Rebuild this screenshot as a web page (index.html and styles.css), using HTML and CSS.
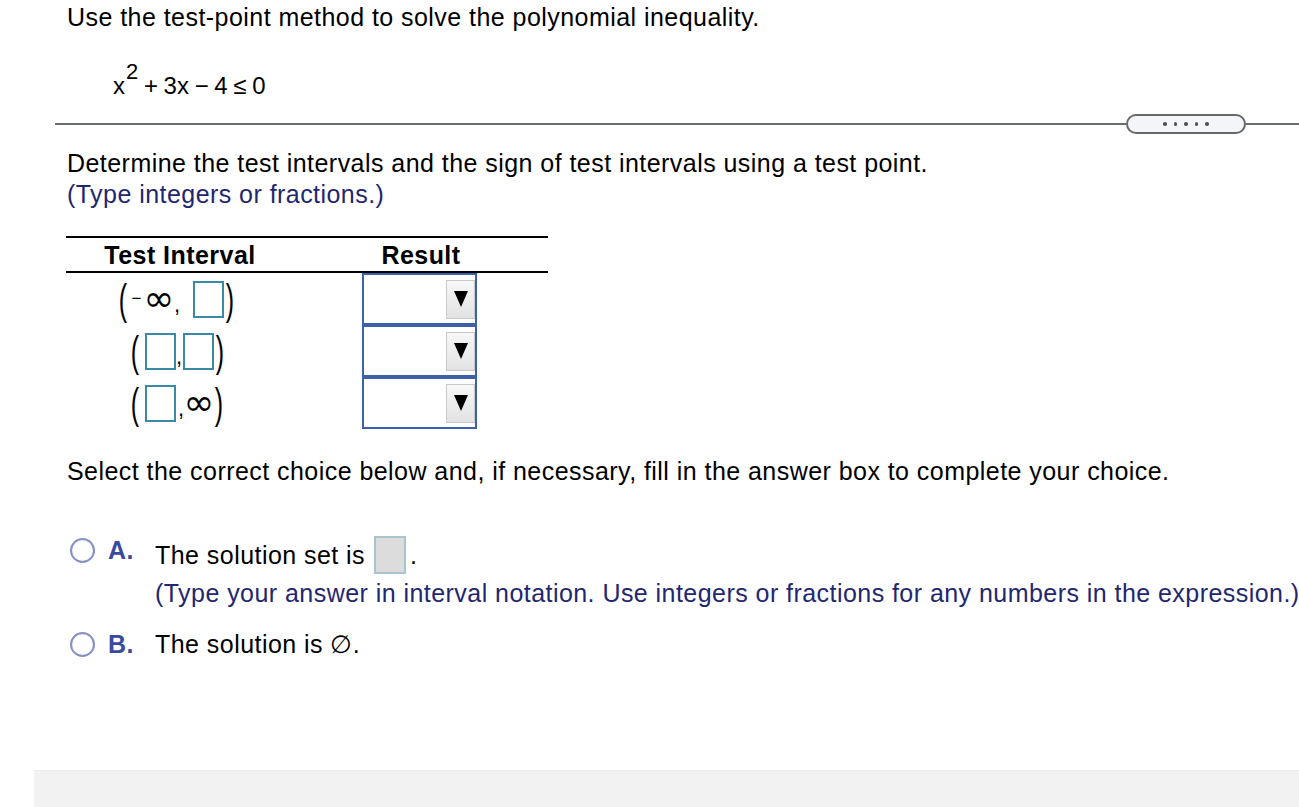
FILE: index.html
```html
<!DOCTYPE html>
<html lang="en">
<head>
<meta charset="utf-8">
<title>Test-point method</title>
<link rel="stylesheet" href="styles.css">
</head>
<body>
<div class="page">
  <section class="question">
    <p class="prompt">Use the test-point method to solve the polynomial inequality.</p>
    <p class="equation">x<sup class="exp">2</sup> + 3x <span class="op">−</span> 4 <span class="op">≤</span> 0</p>
  </section>

  <div class="divider">
    <span class="rule"></span>
    <span class="pill"><i></i><i></i><i></i><i></i><i></i></span>
    <span class="rule tail"></span>
  </div>

  <section class="answer">
    <p class="text">Determine the test intervals and the sign of test intervals using a test point.</p>
    <p class="text note">(Type integers or fractions.)</p>

    <div class="grid">
      <div class="head">Test Interval</div>
      <div class="head">Result</div>

      <div class="interval row1">
        <span class="paren">(</span><span class="minus">−</span><span class="inf">∞</span><span class="comma">,</span><span class="box"></span><span class="paren close">)</span>
      </div>
      <div class="result"><div class="select"><span class="btn"><span class="tri"></span></span></div></div>

      <div class="interval row2">
        <span class="paren">(</span><span class="box"></span><span class="comma">,</span><span class="box b2"></span><span class="paren close">)</span>
      </div>
      <div class="result"><div class="select"><span class="btn"><span class="tri"></span></span></div></div>

      <div class="interval row3">
        <span class="paren">(</span><span class="box"></span><span class="comma">,</span><span class="inf">∞</span><span class="paren close">)</span>
      </div>
      <div class="result"><div class="select"><span class="btn"><span class="tri"></span></span></div></div>
    </div>

    <p class="text select-line">Select the correct choice below and, if necessary, fill in the answer box to complete your choice.</p>

    <div class="choice choice-a">
      <div class="mark"><span class="radio"></span><span class="letter">A.</span></div>
      <div class="body">
        <div class="line"><span>The solution set is</span><span class="answer-box"></span><span>.</span></div>
        <p class="text note hint">(Type your answer in interval notation. Use integers or fractions for any numbers in the expression.)</p>
      </div>
    </div>

    <div class="choice choice-b">
      <div class="mark"><span class="radio"></span><span class="letter">B.</span></div>
      <div class="body">
        <div class="line plain"><span>The solution is ∅.</span></div>
      </div>
    </div>
  </section>

  <div class="footer"></div>
</div>
</body>
</html>
```

FILE: styles.css
```css
* { box-sizing: border-box; }

html, body {
  margin: 0;
  padding: 0;
  background: #ffffff;
}

body {
  font-family: "Liberation Sans", Arial, sans-serif;
  font-size: 25px;
  letter-spacing: 0.45px;
  line-height: 32px;
  color: #000;
  width: 1299px;
  height: 807px;
  overflow: hidden;
}

p { margin: 0; }

.question {
  padding: 1px 0 0 67px;
}

.equation {
  margin-top: 37px;
  padding-left: 46px;
  white-space: pre;
  font-size: 24px;
  letter-spacing: 0;
  word-spacing: -1px;
}

.exp {
  font-size: 22px;
  line-height: 0;
  vertical-align: 15px;
  margin-left: 1px;
}

.divider {
  display: flex;
  align-items: center;
  margin: 12px 0 0 55px;
  height: 20px;
}

.rule {
  flex: 1;
  height: 2px;
  background: #676c6c;
}

.rule.tail {
  flex: 0 0 53px;
}

.pill {
  width: 120px;
  height: 20px;
  border: 2px solid #676868;
  border-radius: 10px;
  background: #f3f5f9;
  display: flex;
  justify-content: center;
  align-items: center;
  gap: 7px;
}

.pill i {
  width: 3.5px;
  height: 3.5px;
  border-radius: 50%;
  background: #505458;
}

.answer {
  padding-left: 67px;
}

.answer > .text:first-child {
  margin-top: 13px;
}

.note {
  color: #1f2770;
  margin-top: -1px;
}

.grid {
  display: grid;
  grid-template-columns: 228px 254px;
  margin-top: 26px;
  width: 482px;
  margin-left: -1px;
}

.head {
  font-weight: bold;
  text-align: center;
  border-top: 2px solid #000;
  border-bottom: 2px solid #000;
  height: 37px;
  line-height: 32px;
  padding-top: 1px;
}

.interval {
  display: flex;
  align-items: center;
  height: 52px;
  letter-spacing: 0;
}

.interval > span {
  display: inline-flex;
  justify-content: center;
  align-items: center;
  flex: none;
}

.row1 { padding-left: 53px; }
.row2, .row3 { padding-left: 65px; }

.paren {
  width: 8px;
  font-size: 25px;
  line-height: 24px;
  height: 24px;
  transform: scaleY(1.7);
}

.paren.close { margin-left: 2px; }

.minus {
  width: 10px;
  font-size: 17px;
  line-height: 20px;
  margin-left: 4.5px;
}

.inf {
  width: 28px;
  font-family: "DejaVu Sans", sans-serif;
  font-size: 37px;
  line-height: 24px;
  height: 24px;
}

.row1 .inf { margin-left: 3.5px; }
.row3 .inf { margin-left: 1px; }

.comma {
  width: 6px;
  font-size: 22px;
  line-height: 20px;
  height: 20px;
  margin-top: 12px;
}

.row1 .comma { margin-left: 1px; }
.row3 .comma { margin-left: 2px; }

.box {
  width: 31px;
  height: 37px;
  border: 2px solid #3a8aa6;
  background: #fff;
}

.row1 .box { margin-left: 13px; }
.row2 .box, .row3 .box { margin-left: 6px; }
.row2 .box.b2 { margin-left: 1px; }

.result {
  height: 52px;
}

.select {
  width: 115px;
  height: 52px;
  margin-left: 68px;
  border: 2px solid #3e60a6;
  display: flex;
  justify-content: flex-end;
  align-items: center;
  background: #fff;
}

.btn {
  width: 29px;
  height: 39px;
  border: 1px solid #c9c9c9;
  background: linear-gradient(#f7f7f7, #e3e3e3);
  display: flex;
  justify-content: center;
  align-items: center;
}

.tri {
  width: 0;
  height: 0;
  border-left: 7px solid transparent;
  border-right: 7px solid transparent;
  border-top: 16px solid #000;
}

.select-line {
  margin-top: 26px;
}

.choice {
  display: flex;
  align-items: flex-start;
}

.choice-a { margin-top: 49px; }
.choice-b { margin-top: 21px; }

.mark {
  display: flex;
  align-items: center;
  height: 28px;
  margin-left: 3px;
}

.radio {
  width: 25px;
  height: 25px;
  border-radius: 50%;
  border: 2.5px solid #8690c6;
  background: #fff;
  box-shadow: inset 0 0 1px #b7bde0;
}

.letter {
  font-weight: bold;
  color: #3a4b9f;
  margin-left: 13px;
  width: 47px;
  line-height: 28px;
}

.body {
  display: flex;
  flex-direction: column;
}

.line {
  display: flex;
  align-items: center;
  height: 38px;
  line-height: 28px;
}

.line.plain {
  height: 28px;
}

.answer-box {
  width: 32px;
  height: 38px;
  background: #dcdcdc;
  border: 2px solid #a8c4cf;
  margin: 0 4px 0 9px;
}

.hint {
  margin-top: 3px;
  white-space: nowrap;
}

.footer {
  margin: 112px 0 0 34px;
  height: 40px;
  background: #f2f2f2;
  border-top: 1px solid #ececec;
}
```
